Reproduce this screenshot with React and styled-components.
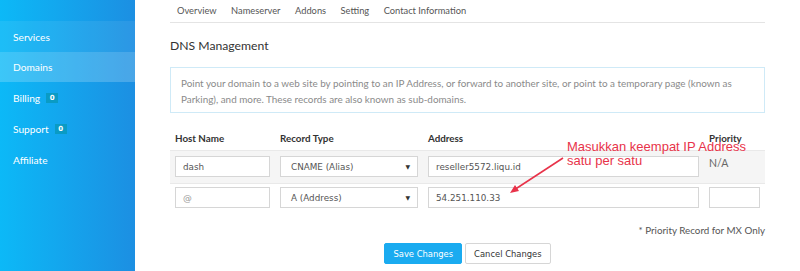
import React from "react";
import styled, { createGlobalStyle } from "styled-components";

const Global = createGlobalStyle`
  html, body { margin: 0; padding: 0; background: #fff; }
  body { font-family: Lato, "Open Sans", sans-serif; }
  * { box-sizing: border-box; }
`;

const Page = styled.div`
  display: flex;
  width: 800px;
  height: 271px;
  overflow: hidden;
`;

const Sidebar = styled.nav`
  width: 135px;
  flex: none;
  background: linear-gradient(to right, #0cb9f7, #1c8fe2);
  padding-top: 21px;
  display: flex;
  flex-direction: column;
`;

const NavItem = styled.div`
  height: ${(p) => (p.$tight ? 30 : 31)}px;
  display: flex;
  align-items: center;
  gap: 6px;
  padding-left: 13px;
  color: #fff;
  font-size: 10.2px;
  background: ${(p) => p.$bg || "transparent"};
`;

const Badge = styled.span`
  display: inline-flex;
  align-items: center;
  justify-content: center;
  width: 12px;
  height: 10px;
  background: #0a9bc4;
  color: #fff;
  font-size: 7px;
  font-weight: 700;
  font-family: "DejaVu Sans", sans-serif;
`;

const Main = styled.main`
  flex: 1;
  min-width: 0;
  padding: 0 35px;
`;

const Tabs = styled.div`
  display: flex;
  gap: 14.5px;
  padding: 5px 7px 0;
  height: 23px;
  border-bottom: 1px solid #e4e4e4;
  font-size: 9.3px;
  color: #555;
`;

const Tab = styled.span``;

const Title = styled.h2`
  margin: 0;
  padding: 15px 0 0;
  height: 44px;
  font-weight: 400;
  font-size: 12.2px;
  color: #333;
`;

const Info = styled.div`
  border: 1px solid #cfeaf7;
  padding: 7px 10px;
  height: 46px;
  font-size: 9.9px;
  line-height: 16px;
  color: #8a8a8a;
  white-space: nowrap;
  overflow: hidden;
`;

const Grid = styled.div`
  margin-top: 14px;
  display: grid;
  grid-template-columns: 105px 148px 281px 61px;
`;

const Head = styled.div`
  padding: 5px 5px 0;
  height: 23px;
  font-size: 9.8px;
  font-weight: 700;
  color: #333;
`;

const Cell = styled.div`
  background: ${(p) => (p.$shaded ? "#f5f5f5" : "transparent")};
  border-top: 1px solid #e9e9e9;
  padding: ${(p) => (p.$shaded ? "5px 5px 6px" : "3px 5px 6px")};
  height: ${(p) => (p.$shaded ? 33 : 32)}px;
  display: flex;
  align-items: ${(p) => (p.$text ? "flex-start" : "stretch")};
`;

const Plain = styled.span`
  padding-top: 1px;
  color: #666;
  font-size: 10.5px;
`;

const Field = styled.div`
  flex: 1;
  border: 1px solid #d6d6d6;
  background: #fff;
  height: 21px;
  display: flex;
  align-items: center;
  justify-content: space-between;
  padding: 0 7px 0 ${(p) => (p.$select ? 10 : 7)}px;
  font-family: "DejaVu Sans", sans-serif;
  font-size: 8.8px;
  color: ${(p) => (p.$muted ? "#999" : "#555")};
`;

const Caret = styled.span`
  font-size: 6px;
  color: #333;
`;

const Note = styled.div`
  text-align: right;
  font-size: 9.8px;
  color: #555;
  margin-top: 9px;
`;

const Buttons = styled.div`
  display: flex;
  justify-content: center;
  gap: 3px;
  margin-top: 7px;
`;

const Button = styled.button`
  height: 21px;
  padding: 0 8px;
  font-family: "DejaVu Sans", sans-serif;
  font-size: 8.4px;
  border: 1px solid ${(p) => (p.$primary ? "#1aabf0" : "#d6d6d6")};
  background: ${(p) => (p.$primary ? "#1aabf0" : "#fff")};
  color: ${(p) => (p.$primary ? "#fff" : "#333")};
  border-radius: 2px;
`;

const Area = styled.div`
  position: relative;
`;

const Annotation = styled.div`
  position: absolute;
  left: 397px;
  top: 140px;
  color: #e8334a;
  font-family: "Liberation Sans", sans-serif;
  font-size: 13px;
  line-height: 14px;
  white-space: nowrap;
`;

const Arrow = styled.svg`
  position: absolute;
  left: 338px;
  top: 155px;
  overflow: visible;
`;

export default function App() {
  return (
    <Page>
      <Global />
      <Sidebar>
        <NavItem $bg="rgba(255,255,255,0.07)">Services</NavItem>
        <NavItem $bg="rgba(255,255,255,0.2)" $tight>Domains</NavItem>
        <NavItem>Billing <Badge>0</Badge></NavItem>
        <NavItem>Support <Badge>0</Badge></NavItem>
        <NavItem>Affiliate</NavItem>
      </Sidebar>
      <Main>
        <Area>
          <Tabs>
            <Tab>Overview</Tab>
            <Tab>Nameserver</Tab>
            <Tab>Addons</Tab>
            <Tab>Setting</Tab>
            <Tab>Contact Information</Tab>
          </Tabs>
          <Title>DNS Management</Title>
          <Info>
            Point your domain to a web site by pointing to an IP Address, or forward to another site, or point to a temporary page (known as
            <br />
            Parking), and more. These records are also known as sub-domains.
          </Info>
          <Grid>
            <Head>Host Name</Head>
            <Head>Record Type</Head>
            <Head>Address</Head>
            <Head>Priority</Head>

            <Cell $shaded><Field>dash</Field></Cell>
            <Cell $shaded><Field $select>CNAME (Alias)<Caret>▼</Caret></Field></Cell>
            <Cell $shaded><Field>reseller5572.liqu.id</Field></Cell>
            <Cell $shaded $text><Plain>N/A</Plain></Cell>

            <Cell><Field $muted>@</Field></Cell>
            <Cell><Field $select>A (Address)<Caret>▼</Caret></Field></Cell>
            <Cell><Field>54.251.110.33</Field></Cell>
            <Cell><Field /></Cell>
          </Grid>
          <Note>* Priority Record for MX Only</Note>
          <Buttons>
            <Button $primary>Save Changes</Button>
            <Button>Cancel Changes</Button>
          </Buttons>
          <Annotation>
            Masukkan keempat IP Address
            <br />
            satu per satu
          </Annotation>
          <Arrow width="56" height="40" viewBox="0 0 56 40">
            <line x1="55" y1="3" x2="6" y2="35" stroke="#e8334a" strokeWidth="1.6" />
            <polygon points="2,38 7,30 11,36" fill="#e8334a" />
          </Arrow>
        </Area>
      </Main>
    </Page>
  );
}
